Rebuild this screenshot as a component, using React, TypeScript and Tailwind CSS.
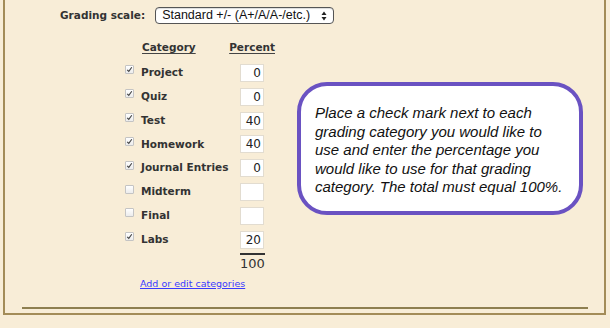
import React from 'react'

const rows = [
  { name: 'Project', checked: true, value: '0' },
  { name: 'Quiz', checked: true, value: '0' },
  { name: 'Test', checked: true, value: '40' },
  { name: 'Homework', checked: true, value: '40' },
  { name: 'Journal Entries', checked: true, value: '0' },
  { name: 'Midterm', checked: false, value: '' },
  { name: 'Final', checked: false, value: '' },
  { name: 'Labs', checked: true, value: '20' },
]

function Check({ checked }: { checked: boolean }) {
  return (
    <span className="flex h-[9px] w-[9px] items-center justify-center rounded-[1px] border border-[#c4c4c4] bg-gradient-to-b from-white to-[#ececec]">
      {checked && (
        <svg width="7" height="7" viewBox="0 0 7 7">
          <path d="M1.2 3.8 L2.8 5.4 L5.8 1.2" fill="none" stroke="#444" strokeWidth="1.1" />
        </svg>
      )}
    </span>
  )
}

export default function App() {
  return (
    <div className="h-[328px] w-[610px] overflow-hidden bg-[#f8edd7] font-['DejaVu_Sans',sans-serif]">
      <div className="relative ml-[3px] h-[315px] w-[603px] border-x-2 border-b-2 border-[#a38c58]">
        {/* Grading scale */}
        <div className="flex items-center pl-[55px] pt-[7px]">
          <span className="text-[10.5px] font-bold text-[#333]">Grading scale:</span>
          <div className="ml-[10px] flex h-[17px] w-[179px] items-center justify-between rounded-[4px] border border-[#555] bg-white pl-[6px] pr-[6px] shadow-[inset_0_1px_1px_rgba(0,0,0,0.15)]">
            <span className="font-['Liberation_Sans',sans-serif] text-[12.5px] leading-none text-[#111]">Standard +/- (A+/A/A-/etc.)</span>
            <svg width="6" height="10" viewBox="0 0 6 10">
              <path d="M3 0.5 L5.5 4 L0.5 4 Z" fill="#222" />
              <path d="M3 9.5 L5.5 6 L0.5 6 Z" fill="#222" />
            </svg>
          </div>
        </div>

        {/* Category table */}
        <div className="ml-[120px] mt-[14px] w-[150px]">
          <div className="flex h-[20px] items-center text-[10.5px] font-bold text-[#333]">
            <span className="ml-[17px] w-[89px] underline decoration-[#444] underline-offset-2">Category</span>
            <span className="underline decoration-[#444] underline-offset-2">Percent</span>
          </div>
          <div className="mt-[3px] flex flex-col">
            {rows.map((r) => (
              <div key={r.name} className="flex h-[23.85px] items-center">
                <span className="w-[16px] -translate-y-[3px]">
                  <Check checked={r.checked} />
                </span>
                <span className="w-[99px] text-[10.5px] font-bold text-[#333]">{r.name}</span>
                <span className="flex h-[18px] w-[24px] items-center justify-end border border-[#e2dcd0] bg-white pr-[2px] text-[12px] text-[#222]">
                  {r.value}
                </span>
              </div>
            ))}
          </div>
          <div className="ml-[115px] mt-[1px] w-[25px] border-t-2 border-[#333] text-center text-[13px] leading-[18px] text-[#333]">
            100
          </div>
          <a href="#" className="ml-[15px] mt-[4px] block text-[9.5px] text-[#3a3aff] underline underline-offset-1">
            Add or edit categories
          </a>
        </div>

        <div className="absolute left-[17px] top-[307px] h-[2px] w-[566px] bg-[#8e7f50]" />

        {/* Callout */}
        <div className="absolute left-[292px] top-[82px] h-[133px] w-[286px] rounded-[30px] border-4 border-[#6a52c2] bg-white pl-[14px] pt-[18px] font-['Liberation_Sans',sans-serif] text-[15px] italic leading-[18.5px] text-[#111]">
          Place a check mark next to each
          <br />
          grading category you would like to
          <br />
          use and enter the percentage you
          <br />
          would like to use for that grading
          <br />
          category. The total must equal 100%.
        </div>
      </div>
    </div>
  )
}
